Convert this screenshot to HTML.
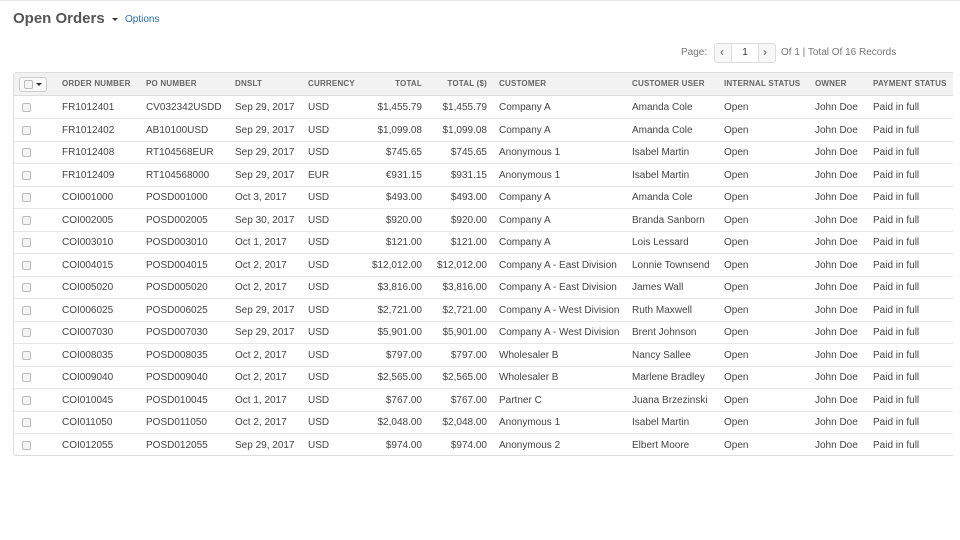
<!DOCTYPE html>
<html><head><meta charset="utf-8"><style>
body{margin:0;width:960px;height:540px;background:#fff;font-family:"Liberation Sans",Arial,sans-serif;color:#444;position:relative;overflow:hidden}
.top{position:absolute;left:0;top:0;width:960px;height:1px;background:#e8e8e8}
h1{position:absolute;left:13px;top:10px;margin:0;font-size:15px;font-weight:bold;color:#555}
.caret{display:inline-block;width:0;height:0;border-left:3px solid transparent;border-right:3px solid transparent;border-top:3px solid #333;vertical-align:middle;margin-left:3px}
.opt{position:absolute;left:125px;top:14px;font-size:10px;color:#2a6ebb}
.pg{position:absolute;left:681px;top:47px;font-size:10px;color:#777}
.pbox{position:absolute;left:714px;top:43px;width:60px;height:18px;border:1px solid #ddd;border-radius:3px;background:#f7f7f7}
.pbox .in{position:absolute;left:16px;top:-1px;width:26px;height:18px;background:#fff;border:1px solid #ddd;font-size:10px;color:#333;text-align:center;line-height:18px}
.pbox .l{position:absolute;left:5px;top:1px;font-size:12px;color:#666}
.pbox .r{position:absolute;left:48px;top:1px;font-size:12px;color:#666}
.tot{position:absolute;left:781px;top:47px;font-size:10px;color:#777}
.tbl{position:absolute;left:13px;top:72px;width:939px;height:382px;border:1px solid #ddd;border-right:none;border-radius:3px 0 0 3px}
.hd{position:absolute;left:0;top:0;width:939px;height:22px;background:#f2f2f2;border-bottom:1px solid #ddd;font-size:8px;font-weight:bold;color:#666;letter-spacing:0.2px}
.row{position:absolute;left:0;width:939px;height:22px;border-bottom:1px solid #e6e6e6;font-size:10px;color:#444}
.row span{position:absolute;top:1px;line-height:22px;white-space:nowrap}
.hd span{position:absolute;top:0;line-height:22px;white-space:nowrap}
.cb{position:absolute;left:8px;top:7px;width:7px;height:7px;border:1px solid #bbb;border-radius:2px;background:#f4f4f4}
.hcb{position:absolute;left:5px;top:4px;width:26px;height:13px;border:1px solid #ccc;border-radius:3px;background:#fafafa}
.hcb .cb{left:4px;top:2px}
.hcb .caret{position:absolute;left:16px;top:5px;margin:0}
.a{left:48px}.b{left:132px}.c{left:221px}.d{left:294px}.e{right:531px}.f{right:466px}.g{left:485px}.h{left:618px}.i{left:710px}.j{left:801px}.k{left:859px}
</style></head><body>
<div class="top"></div>
<h1>Open Orders <span class="caret"></span></h1>
<div class="opt">Options</div>
<div class="pg">Page:</div>
<div class="pbox"><span class="l">&lsaquo;</span><div class="in">1</div><span class="r">&rsaquo;</span></div>
<div class="tot">Of 1 | Total Of 16 Records</div>
<div class="tbl">
<div class="hd"><div class="hcb"><div class="cb"></div><span class="caret"></span></div><span class="a">ORDER NUMBER</span><span class="b">PO NUMBER</span><span class="c">DNSLT</span><span class="d">CURRENCY</span><span class="e">TOTAL</span><span class="f">TOTAL ($)</span><span class="g">CUSTOMER</span><span class="h">CUSTOMER USER</span><span class="i">INTERNAL STATUS</span><span class="j">OWNER</span><span class="k">PAYMENT STATUS</span></div>
<div class="row" style="top:23px"><div class="cb"></div><span class="a">FR1012401</span><span class="b">CV032342USDD</span><span class="c">Sep 29, 2017</span><span class="d">USD</span><span class="e">$1,455.79</span><span class="f">$1,455.79</span><span class="g">Company A</span><span class="h">Amanda Cole</span><span class="i">Open</span><span class="j">John Doe</span><span class="k">Paid in full</span></div>
<div class="row" style="top:45.5px"><div class="cb"></div><span class="a">FR1012402</span><span class="b">AB10100USD</span><span class="c">Sep 29, 2017</span><span class="d">USD</span><span class="e">$1,099.08</span><span class="f">$1,099.08</span><span class="g">Company A</span><span class="h">Amanda Cole</span><span class="i">Open</span><span class="j">John Doe</span><span class="k">Paid in full</span></div>
<div class="row" style="top:68px"><div class="cb"></div><span class="a">FR1012408</span><span class="b">RT104568EUR</span><span class="c">Sep 29, 2017</span><span class="d">USD</span><span class="e">$745.65</span><span class="f">$745.65</span><span class="g">Anonymous 1</span><span class="h">Isabel Martin</span><span class="i">Open</span><span class="j">John Doe</span><span class="k">Paid in full</span></div>
<div class="row" style="top:90.5px"><div class="cb"></div><span class="a">FR1012409</span><span class="b">RT104568000</span><span class="c">Sep 29, 2017</span><span class="d">EUR</span><span class="e">€931.15</span><span class="f">$931.15</span><span class="g">Anonymous 1</span><span class="h">Isabel Martin</span><span class="i">Open</span><span class="j">John Doe</span><span class="k">Paid in full</span></div>
<div class="row" style="top:113px"><div class="cb"></div><span class="a">COI001000</span><span class="b">POSD001000</span><span class="c">Oct 3, 2017</span><span class="d">USD</span><span class="e">$493.00</span><span class="f">$493.00</span><span class="g">Company A</span><span class="h">Amanda Cole</span><span class="i">Open</span><span class="j">John Doe</span><span class="k">Paid in full</span></div>
<div class="row" style="top:135.5px"><div class="cb"></div><span class="a">COI002005</span><span class="b">POSD002005</span><span class="c">Sep 30, 2017</span><span class="d">USD</span><span class="e">$920.00</span><span class="f">$920.00</span><span class="g">Company A</span><span class="h">Branda Sanborn</span><span class="i">Open</span><span class="j">John Doe</span><span class="k">Paid in full</span></div>
<div class="row" style="top:158px"><div class="cb"></div><span class="a">COI003010</span><span class="b">POSD003010</span><span class="c">Oct 1, 2017</span><span class="d">USD</span><span class="e">$121.00</span><span class="f">$121.00</span><span class="g">Company A</span><span class="h">Lois Lessard</span><span class="i">Open</span><span class="j">John Doe</span><span class="k">Paid in full</span></div>
<div class="row" style="top:180.5px"><div class="cb"></div><span class="a">COI004015</span><span class="b">POSD004015</span><span class="c">Oct 2, 2017</span><span class="d">USD</span><span class="e">$12,012.00</span><span class="f">$12,012.00</span><span class="g">Company A - East Division</span><span class="h">Lonnie Townsend</span><span class="i">Open</span><span class="j">John Doe</span><span class="k">Paid in full</span></div>
<div class="row" style="top:203px"><div class="cb"></div><span class="a">COI005020</span><span class="b">POSD005020</span><span class="c">Oct 2, 2017</span><span class="d">USD</span><span class="e">$3,816.00</span><span class="f">$3,816.00</span><span class="g">Company A - East Division</span><span class="h">James Wall</span><span class="i">Open</span><span class="j">John Doe</span><span class="k">Paid in full</span></div>
<div class="row" style="top:225.5px"><div class="cb"></div><span class="a">COI006025</span><span class="b">POSD006025</span><span class="c">Sep 29, 2017</span><span class="d">USD</span><span class="e">$2,721.00</span><span class="f">$2,721.00</span><span class="g">Company A - West Division</span><span class="h">Ruth Maxwell</span><span class="i">Open</span><span class="j">John Doe</span><span class="k">Paid in full</span></div>
<div class="row" style="top:248px"><div class="cb"></div><span class="a">COI007030</span><span class="b">POSD007030</span><span class="c">Sep 29, 2017</span><span class="d">USD</span><span class="e">$5,901.00</span><span class="f">$5,901.00</span><span class="g">Company A - West Division</span><span class="h">Brent Johnson</span><span class="i">Open</span><span class="j">John Doe</span><span class="k">Paid in full</span></div>
<div class="row" style="top:270.5px"><div class="cb"></div><span class="a">COI008035</span><span class="b">POSD008035</span><span class="c">Oct 2, 2017</span><span class="d">USD</span><span class="e">$797.00</span><span class="f">$797.00</span><span class="g">Wholesaler B</span><span class="h">Nancy Sallee</span><span class="i">Open</span><span class="j">John Doe</span><span class="k">Paid in full</span></div>
<div class="row" style="top:293px"><div class="cb"></div><span class="a">COI009040</span><span class="b">POSD009040</span><span class="c">Oct 2, 2017</span><span class="d">USD</span><span class="e">$2,565.00</span><span class="f">$2,565.00</span><span class="g">Wholesaler B</span><span class="h">Marlene Bradley</span><span class="i">Open</span><span class="j">John Doe</span><span class="k">Paid in full</span></div>
<div class="row" style="top:315.5px"><div class="cb"></div><span class="a">COI010045</span><span class="b">POSD010045</span><span class="c">Oct 1, 2017</span><span class="d">USD</span><span class="e">$767.00</span><span class="f">$767.00</span><span class="g">Partner C</span><span class="h">Juana Brzezinski</span><span class="i">Open</span><span class="j">John Doe</span><span class="k">Paid in full</span></div>
<div class="row" style="top:338px"><div class="cb"></div><span class="a">COI011050</span><span class="b">POSD011050</span><span class="c">Oct 2, 2017</span><span class="d">USD</span><span class="e">$2,048.00</span><span class="f">$2,048.00</span><span class="g">Anonymous 1</span><span class="h">Isabel Martin</span><span class="i">Open</span><span class="j">John Doe</span><span class="k">Paid in full</span></div>
<div class="row" style="top:360.5px;border-bottom:none"><div class="cb"></div><span class="a">COI012055</span><span class="b">POSD012055</span><span class="c">Sep 29, 2017</span><span class="d">USD</span><span class="e">$974.00</span><span class="f">$974.00</span><span class="g">Anonymous 2</span><span class="h">Elbert Moore</span><span class="i">Open</span><span class="j">John Doe</span><span class="k">Paid in full</span></div>
</div>
</body></html>
